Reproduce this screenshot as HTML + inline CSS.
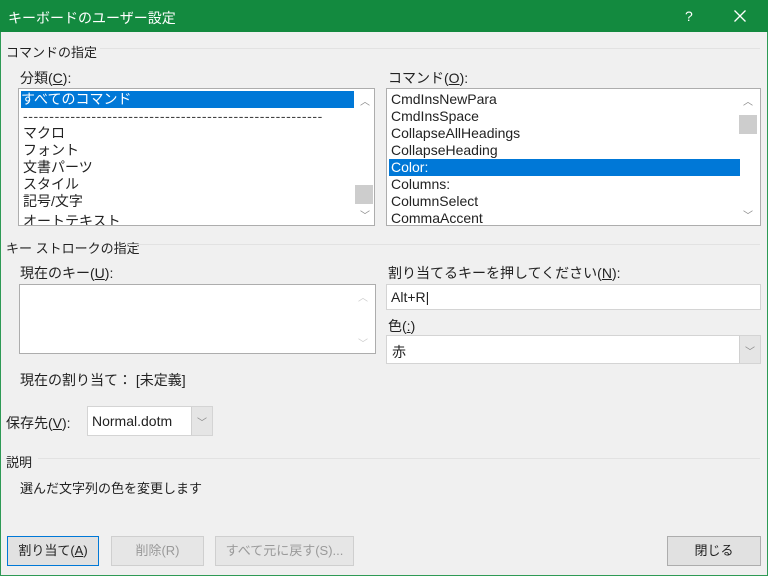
<!DOCTYPE html>
<html><head><meta charset="utf-8"><style>
*{margin:0;padding:0;box-sizing:border-box}
body{width:768px;height:576px;overflow:hidden;background:#f0f0f0;font-family:"Liberation Sans","Noto Sans CJK JP",sans-serif;font-size:13px;color:#222;position:relative}
.a{position:absolute;white-space:nowrap}
.title{left:0;top:0;width:768px;height:32px;background:#138a3f;color:#fff}
.win{left:0;top:32px;width:768px;height:544px;border:1px solid #2e9a55;border-top:none}
.line{height:1px;background:#e2e2e2}
.box{background:#fff;border:1px solid #adadad}
.row{position:absolute;left:4px;height:17px;line-height:17px;font-size:14px}
.sel{background:#0078d7;color:#fff}
.btn{background:#e1e1e1;border:1px solid #adadad;text-align:center;line-height:28px;height:30px}
.dis{color:#9a9a9a;border-color:#cfcfcf;background:#e6e6e6}
.arr{color:#888;font-size:10px}
</style></head><body>
<div class="a title"><span class="a" style="left:8px;top:8px;font-size:14px">キーボードのユーザー設定</span><span class="a" style="left:685px;top:8px;font-size:14px">?</span>
<svg class="a" style="left:734px;top:10px" width="12" height="12" viewBox="0 0 12 12"><path d="M0.5 0.5L11.5 11.5M11.5 0.5L0.5 11.5" stroke="#fff" stroke-width="1.3" fill="none"/></svg></div>
<div class="a win"></div>

<div class="a" style="left:6px;top:42px">コマンドの指定</div>
<div class="a line" style="left:100px;top:48px;width:660px"></div>
<div class="a" style="left:20px;top:68px;font-size:14px">分類(<u>C</u>):</div>
<div class="a box" style="left:18px;top:88px;width:357px;height:138px;overflow:hidden">
 <div class="row sel" style="left:2px;top:2px;width:333px">すべてのコマンド</div>
 <div class="row" style="top:19px;letter-spacing:0.6px;color:#444">---------------------------------------------------------</div>
 <div class="row" style="top:36px">マクロ</div>
 <div class="row" style="top:53px">フォント</div>
 <div class="row" style="top:70px">文書パーツ</div>
 <div class="row" style="top:87px">スタイル</div>
 <div class="row" style="top:104px">記号/文字</div>
 <div class="row" style="top:124px">オートテキスト</div>
 <div class="a" style="left:336px;top:0;width:19px;height:136px;background:#fff"></div>
 <div class="a arr" style="left:341px;top:4px">︿</div>
 <div class="a" style="left:336px;top:96px;width:18px;height:19px;background:#cdcdcd"></div>
 <div class="a arr" style="left:341px;top:118px">﹀</div>
</div>

<div class="a" style="left:388px;top:68px;font-size:14px">コマンド(<u>O</u>):</div>
<div class="a box" style="left:386px;top:88px;width:375px;height:138px;overflow:hidden">
 <div class="row" style="top:2px">CmdInsNewPara</div>
 <div class="row" style="top:19px">CmdInsSpace</div>
 <div class="row" style="top:36px">CollapseAllHeadings</div>
 <div class="row" style="top:53px">CollapseHeading</div>
 <div class="row sel" style="left:2px;top:70px;width:351px;padding-left:2px">Color:</div>
 <div class="row" style="top:87px">Columns:</div>
 <div class="row" style="top:104px">ColumnSelect</div>
 <div class="row" style="top:121px">CommaAccent</div>
 <div class="a arr" style="left:356px;top:4px">︿</div>
 <div class="a" style="left:352px;top:26px;width:18px;height:19px;background:#cdcdcd"></div>
 <div class="a arr" style="left:356px;top:118px">﹀</div>
</div>

<div class="a" style="left:6px;top:238px">キー ストロークの指定</div>
<div class="a line" style="left:128px;top:244px;width:632px"></div>
<div class="a" style="left:20px;top:263px;font-size:14px">現在のキー(<u>U</u>):</div>
<div class="a box" style="left:19px;top:284px;width:357px;height:70px"><span class="a arr" style="left:338px;top:4px;color:#ccc">︿</span><span class="a arr" style="left:338px;top:50px;color:#ccc">﹀</span></div>
<div class="a" style="left:388px;top:263px;font-size:14px">割り当てるキーを押してください(<u>N</u>):</div>
<div class="a box" style="left:386px;top:284px;width:375px;height:26px;border-color:#d4d4d4"><span class="a" style="left:4px;top:4px;font-size:14px">Alt+R|</span></div>
<div class="a" style="left:388px;top:316px;font-size:14px">色(<u>:</u>)</div>
<div class="a box" style="left:386px;top:335px;width:375px;height:29px;border-color:#d4d4d4"><span class="a" style="left:5px;top:6px;font-size:14px">赤</span><div class="a" style="right:0;top:0;width:21px;height:27px;background:#e5e5e5;border-left:1px solid #d0d0d0"><span class="a arr" style="left:5px;top:7px">﹀</span></div></div>
<div class="a" style="left:20px;top:370px;font-size:14px">現在の割り当て： [未定義]</div>

<div class="a" style="left:6px;top:413px;font-size:14px">保存先(<u>V</u>):</div>
<div class="a box" style="left:87px;top:406px;width:126px;height:30px;border-color:#d4d4d4"><span class="a" style="left:4px;top:6px;font-size:14px">Normal.dotm</span><div class="a" style="right:0;top:0;width:21px;height:28px;background:#e5e5e5;border-left:1px solid #d0d0d0"><span class="a arr" style="left:5px;top:7px">﹀</span></div></div>

<div class="a" style="left:6px;top:452px">説明</div>
<div class="a line" style="left:38px;top:458px;width:722px"></div>
<div class="a" style="left:20px;top:478px">選んだ文字列の色を変更します</div>

<div class="a btn" style="left:7px;top:536px;width:92px;border:1px solid #0078d7">割り当て(<u>A</u>)</div>
<div class="a btn dis" style="left:111px;top:536px;width:93px">削除(R)</div>
<div class="a btn dis" style="left:215px;top:536px;width:139px">すべて元に戻す(S)...</div>
<div class="a btn" style="left:667px;top:536px;width:94px">閉じる</div>
</body></html>
